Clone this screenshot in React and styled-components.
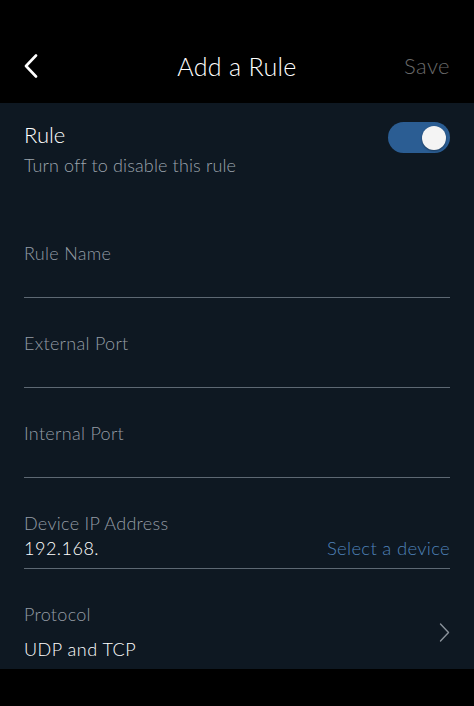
import React from 'react';
import styled, { createGlobalStyle } from 'styled-components';

const GlobalStyle = createGlobalStyle`
  html, body {
    margin: 0;
    padding: 0;
    background: #000;
  }
  body {
    font-family: 'Lato', 'Noto Sans', sans-serif;
    -webkit-font-smoothing: antialiased;
  }
`;

//Style
const Screen = styled.div`
  width: 474px;
  height: 706px;
  background: #000;
  display: flex;
  flex-direction: column;
  overflow: hidden;
`;

const Header = styled.header`
  height: 103px;
  box-sizing: border-box;
  padding: 28px 24px 0;
  display: grid;
  grid-template-columns: 80px 1fr 80px;
  align-items: center;
`;

const BackButton = styled.button`
  background: none;
  border: none;
  padding: 0;
  width: 20px;
  height: 28px;
  display: flex;
  align-items: center;
  cursor: pointer;
`;

const Title = styled.h1`
  margin: 0;
  text-align: center;
  color: #fff;
  font-size: 25px;
  font-weight: 300;
  letter-spacing: 0.3px;
`;

const SaveButton = styled.button`
  justify-self: end;
  background: none;
  border: none;
  padding: 0;
  color: #6a6a6a;
  font-family: inherit;
  font-size: 22px;
  font-weight: 300;
  letter-spacing: 0.4px;
  cursor: pointer;
`;

const Panel = styled.main`
  height: 566px;
  background: #0e1822;
  padding: 19px 24px 0;
  box-sizing: border-box;
`;

const ToggleRow = styled.div`
  display: flex;
  justify-content: space-between;
  align-items: flex-start;
  margin-bottom: 32px;
`;

const RuleTitle = styled.div`
  color: #fff;
  font-size: 22px;
  font-weight: 300;
  line-height: 26px;
`;

const RuleHint = styled.div`
  margin-top: 6px;
  color: #9ca4ad;
  font-size: 18px;
  font-weight: 300;
  letter-spacing: 0.15px;
  line-height: 22px;
`;

const Track = styled.div`
  width: 62px;
  height: 31px;
  border-radius: 16px;
  background: ${props => (props.on ? '#2b5d93' : '#444c55')};
  display: flex;
  align-items: center;
  justify-content: ${props => (props.on ? 'flex-end' : 'flex-start')};
  padding: 0 4px;
  box-sizing: border-box;
`;

const Knob = styled.div`
  width: 24px;
  height: 24px;
  border-radius: 50%;
  background: #f4f4f4;
  box-shadow: 0 1px 2px rgba(0, 0, 0, 0.4);
`;

const Field = styled.div`
  padding-top: 35px;
  border-bottom: 1px solid #5d6873;
`;

const Label = styled.div`
  color: #949ca5;
  font-size: 18px;
  font-weight: 300;
  letter-spacing: 0.3px;
  line-height: 20px;
`;

const InputArea = styled.div`
  height: 34px;
`;

const ValueRow = styled.div`
  display: flex;
  justify-content: space-between;
  align-items: center;
  height: 24px;
  margin: 3px 0 8px;
`;

const Value = styled.div`
  color: #fff;
  font-size: 18px;
  font-weight: 300;
  letter-spacing: 0.5px;
  line-height: 24px;
`;

const LinkText = styled.div`
  color: #4f82b9;
  font-size: 18.5px;
  font-weight: 300;
  letter-spacing: 0.3px;
  line-height: 24px;
  cursor: pointer;
`;

const SelectRow = styled.div`
  padding-top: 35px;
  display: flex;
  justify-content: space-between;
  align-items: center;
`;

const SelectText = styled.div`
  display: flex;
  flex-direction: column;
  gap: 13px;
`;

function TextField({ label }) {
  return (
    <Field>
      <Label>{label}</Label>
      <InputArea />
    </Field>
  );
}

export default function App() {
  return (
    <Screen>
      <GlobalStyle />
      <Header>
        <BackButton aria-label="Back">
          <svg width="14" height="24" viewBox="0 0 14 24">
            <path
              d="M12 1.5 L2 12 L12 22.5"
              fill="none"
              stroke="#fff"
              strokeWidth="2.6"
              strokeLinecap="round"
              strokeLinejoin="round"
            />
          </svg>
        </BackButton>
        <Title>Add a Rule</Title>
        <SaveButton>Save</SaveButton>
      </Header>
      <Panel>
        <ToggleRow>
          <div>
            <RuleTitle>Rule</RuleTitle>
            <RuleHint>Turn off to disable this rule</RuleHint>
          </div>
          <Track on>
            <Knob />
          </Track>
        </ToggleRow>
        <TextField label="Rule Name" />
        <TextField label="External Port" />
        <TextField label="Internal Port" />
        <Field>
          <Label>Device IP Address</Label>
          <ValueRow>
            <Value>192.168.</Value>
            <LinkText>Select a device</LinkText>
          </ValueRow>
        </Field>
        <SelectRow>
          <SelectText>
            <Label>Protocol</Label>
            <Value>UDP and TCP</Value>
          </SelectText>
          <svg width="11" height="19" viewBox="0 0 11 19">
            <path
              d="M1.5 1 L9.5 9.5 L1.5 18"
              fill="none"
              stroke="#8a929b"
              strokeWidth="1.4"
              strokeLinecap="round"
              strokeLinejoin="round"
            />
          </svg>
        </SelectRow>
      </Panel>
    </Screen>
  );
}
